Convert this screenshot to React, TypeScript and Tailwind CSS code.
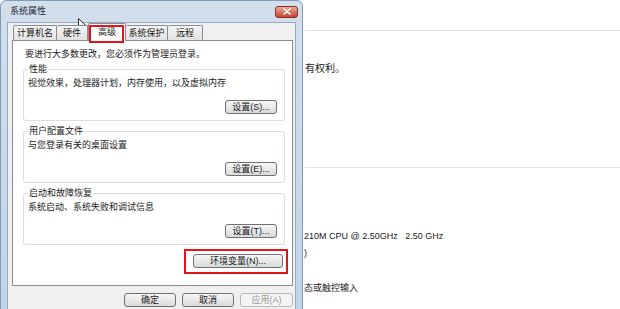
import React from 'react';

const font = { fontFamily: '"Liberation Sans", "Noto Sans CJK SC", sans-serif' };

const tabs = [
  { label: '计算机名', w: 'w-[44px]' },
  { label: '硬件', w: 'w-[31px]' },
  { label: '高级', w: 'w-[38px]', active: true },
  { label: '系统保护', w: 'w-[42px]' },
  { label: '远程', w: 'w-[35px]' },
];

const Button: React.FC<{ label: string; className?: string; disabled?: boolean }> = ({ label, className, disabled }) => (
  <div
    className={
      'h-[14px] flex items-center justify-center rounded-[3px] border text-[9px] leading-none ' +
      (disabled
        ? 'border-[#b5b9bc] bg-[#f4f4f4] text-[#9a9a9a] '
        : 'border-[#707070] bg-linear-to-b from-[#f7f7f7] to-[#dadada] text-[#1a1a1a] ') +
      (className || '')
    }
  >
    {label}
  </div>
);

const Group: React.FC<{ title: string; desc: string; action: string }> = ({ title, desc, action }) => (
  <fieldset className="ml-[10px] mr-[7px] border border-[#d5dfe5] rounded-[3px] pl-[4px] pr-[7px] pb-[6px]">
    <legend className="px-[1px] text-[9px] leading-[12px] text-[#1a1a1a]">{title}</legend>
    <div className="mt-[2px] text-[9px] leading-[12px] text-[#1a1a1a]">{desc}</div>
    <div className="mt-[11px] flex justify-end">
      <Button label={action} className="w-[52px]" />
    </div>
  </fieldset>
);

export default function App() {
  return (
    <div className="w-[620px] h-[309px] overflow-hidden bg-white flex relative" style={font}>
      {/* dialog window */}
      <div className="w-[303px] h-[330px] shrink-0 flex flex-col bg-linear-to-b from-[#d3dfec] to-[#c0d3e8] border border-[#7f9bb8] rounded-t-[6px]">
        <div className="h-[21px] shrink-0 flex items-center justify-between pl-[9px] pr-[4px]">
          <span className="text-[9px] leading-none text-[#1e2a38]">系统属性</span>
          <div className="w-[23px] h-[12px] rounded-[3px] border border-[#8e2e22] bg-linear-to-b from-[#e9a899] to-[#c4432e] flex items-center justify-center">
            <svg width="8" height="7" viewBox="0 0 8 7">
              <path d="M1 1 L7 6 M7 1 L1 6" stroke="#ffffff" strokeWidth="1.6" strokeLinecap="round" />
            </svg>
          </div>
        </div>

        <div className="flex-1 mx-[6px] bg-[#f0f0f0] border border-[#93aac3] flex flex-col">
          {/* tabs */}
          <div className="h-[17px] ml-[5px] flex items-end relative z-10">
            {tabs.map((t) =>
              t.active ? (
                <div
                  key={t.label}
                  className={t.w + ' h-[18px] -mb-px relative bg-white border-x border-t border-[#898c95] rounded-t-[2px] flex items-center justify-center text-[9px] leading-none text-[#1a1a1a]'}
                >
                  {t.label}
                  <span className="absolute left-0 right-[1px] top-[1px] -bottom-[2px] border-2 border-[#e5141b]" />
                </div>
              ) : (
                <div
                  key={t.label}
                  className={t.w + ' h-[15px] bg-linear-to-b from-[#f4f4f4] to-[#e2e2e2] border-t border-r first:border-l border-[#898c95] rounded-t-[2px] flex items-center justify-center text-[9px] leading-none text-[#1a1a1a]'}
                >
                  {t.label}
                </div>
              )
            )}
          </div>

          {/* tab panel */}
          <div className="ml-[4px] mr-[2px] h-[246px] shrink-0 bg-white border border-[#898c95] flex flex-col">
            <div className="pl-[12px] pt-[7px] text-[9px] leading-[12px] text-[#1a1a1a]">要进行大多数更改，您必须作为管理员登录。</div>
            <div className="mt-[3px] flex flex-col gap-[4px]">
              <Group title="性能" desc="视觉效果，处理器计划，内存使用，以及虚拟内存" action="设置(S)..." />
              <Group title="用户配置文件" desc="与您登录有关的桌面设置" action="设置(E)..." />
              <Group title="启动和故障恢复" desc="系统启动、系统失败和调试信息" action="设置(T)..." />
            </div>
            <div className="mt-[4px] mr-[4px] flex justify-end">
              <div className="border-2 border-[#e5141b] pl-[7px] pr-[3px] pt-[3px] pb-[4px]">
                <Button label="环境变量(N)..." className="w-[90px]" />
              </div>
            </div>
          </div>

          {/* dialog buttons */}
          <div className="mt-[7px] mr-[2px] flex justify-end gap-[6px]">
            <Button label="确定" className="w-[52px]" />
            <Button label="取消" className="w-[52px]" />
            <Button label="应用(A)" className="w-[53px]" disabled />
          </div>
        </div>
      </div>

      {/* page behind the dialog */}
      <div className="flex-1 flex flex-col text-[#1a1a1a]">
        <div className="h-[30px] shrink-0" />
        <div className="border-t border-[#e3e3e3] ml-[2px]" />
        <div className="mt-[30px] pl-[2px] text-[10px] leading-[14px]" style={{ fontFamily: '"Noto Sans CJK SC", sans-serif' }}>有权利。</div>
        <div className="mt-[92px] border-t border-[#e3e3e3] ml-[2px]" />
        <div className="mt-[61px] pl-[1px] text-[9px] leading-[14px] whitespace-pre">210M CPU @ 2.50GHz   2.50 GHz</div>
        <div className="mt-[3px] pl-[1px] text-[9px] leading-[14px]">)</div>
        <div className="mt-[21px] pl-[1px] text-[9px] leading-[14px]" style={{ fontFamily: '"Noto Sans CJK SC", sans-serif' }}>态或触控输入</div>
      </div>

      {/* mouse pointer */}
      <svg className="absolute left-[78px] top-[18px]" width="11" height="16" viewBox="0 0 11 16">
        <path d="M0.5 0.5 L0.5 12.5 L3.5 9.8 L5.7 14.8 L7.6 14 L5.5 9.2 L9.5 9.2 Z" fill="#ffffff" stroke="#2a2a2a" strokeWidth="1" strokeLinejoin="round" />
      </svg>
    </div>
  );
}
